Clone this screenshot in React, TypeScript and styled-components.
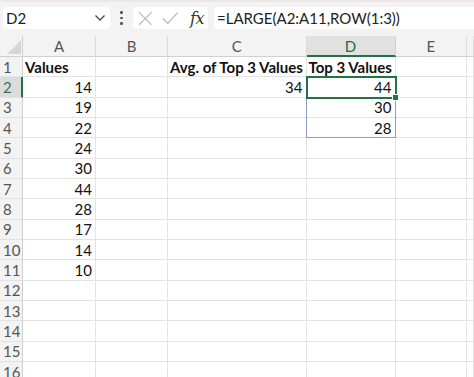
import React from "react";
import styled, { createGlobalStyle } from "styled-components";

const GlobalStyle = createGlobalStyle`
  html, body { margin: 0; padding: 0; background: #ffffff; overflow: hidden; }
  body { font-family: Lato, "Noto Sans", sans-serif; }
`;

const Page = styled.div`
  width: 474px;
  height: 377px;
  overflow: hidden;
  background: #ffffff;
`;

const FormulaBar = styled.div`
  height: 36px;
  box-sizing: border-box;
  background: #f3f3f3;
  border-top: 2px solid #efe6e6;
  display: flex;
  align-items: center;
  padding: 0 0 2px 3px;
  gap: 0;
`;

const NameBox = styled.div`
  width: 107px;
  height: 22px;
  box-sizing: border-box;
  background: #ffffff;
  border-radius: 4px;
  display: flex;
  align-items: center;
  justify-content: space-between;
  padding: 0 4px 0 3px;
  font-size: 15px;
  color: #222;
`;

const Dots = styled.div`
  width: 23px;
  display: flex;
  flex-direction: column;
  align-items: center;
  gap: 3px;
  & > span {
    width: 2.5px;
    height: 2.5px;
    border-radius: 50%;
    background: #555;
  }
`;

const FxBox = styled.div`
  width: 75px;
  height: 22px;
  box-sizing: border-box;
  background: #ffffff;
  border-radius: 4px;
  display: flex;
  align-items: center;
  padding: 0 4px 0 5px;
  gap: 9px;
`;

const Fx = styled.span`
  font-family: "DejaVu Serif", "Liberation Serif", serif;
  font-style: italic;
  font-size: 16px;
  color: #333;
  margin-left: 3px;
  letter-spacing: -0.5px;
`;

const FormulaInput = styled.div`
  flex: 1;
  margin-left: 6px;
  height: 22px;
  box-sizing: border-box;
  background: #ffffff;
  border-radius: 4px 0 0 4px;
  display: flex;
  align-items: center;
  padding-left: 3px;
  font-size: 15px;
  color: #222;
`;

const Sheet = styled.div`
  display: grid;
  grid-template-columns: 23px 73px 72px 138.5px 89px 71.5px 1fr;
  grid-template-rows: 21px repeat(16, 20.33px);
`;

interface CellProps {
  $r: number;
  $c: number;
}

const Cell = styled.div<CellProps & { $align?: "left" | "right"; $bold?: boolean }>`
  grid-row: ${(p) => p.$r};
  grid-column: ${(p) => p.$c};
  box-sizing: border-box;
  border-right: 1px solid #e3e3e3;
  border-bottom: 1px solid #e3e3e3;
  display: flex;
  align-items: center;
  justify-content: ${(p) => (p.$align === "right" ? "flex-end" : "flex-start")};
  padding: 0 3px 0 2px;
  font-size: 15px;
  font-weight: ${(p) => (p.$bold ? 700 : 400)};
  color: #111;
  white-space: nowrap;
  overflow: visible;
`;

const ColHeader = styled.div<CellProps & { $active?: boolean }>`
  grid-row: ${(p) => p.$r};
  grid-column: ${(p) => p.$c};
  box-sizing: border-box;
  background: ${(p) => (p.$active ? "#e1e1e1" : "#f3f3f3")};
  border-right: 1px solid ${(p) => (p.$active ? "#d0d0d0" : "#dcdcdc")};
  border-bottom: ${(p) => (p.$active ? "2px solid #217346" : "1px solid #d0d0d0")};
  display: flex;
  align-items: center;
  justify-content: center;
  font-size: 15px;
  color: ${(p) => (p.$active ? "#1e6b42" : "#555")};
`;

const RowHeader = styled.div<CellProps & { $active?: boolean }>`
  grid-row: ${(p) => p.$r};
  grid-column: ${(p) => p.$c};
  box-sizing: border-box;
  background: ${(p) => (p.$active ? "#dcdcdc" : "#f3f3f3")};
  border-right: ${(p) => (p.$active ? "2px solid #217346" : "1px solid #d0d0d0")};
  border-bottom: 1px solid #e2e2e2;
  display: flex;
  align-items: center;
  padding-left: 3px;
  font-size: 15px;
  color: ${(p) => (p.$active ? "#3f6f55" : "#555")};
`;

const Corner = styled.div`
  grid-row: 1;
  grid-column: 1;
  box-sizing: border-box;
  background: #f3f3f3;
  border-right: 1px solid #d0d0d0;
  border-bottom: 1px solid #d0d0d0;
  display: flex;
  align-items: flex-end;
  justify-content: flex-end;
  padding: 0 1px 2px 0;
`;

const SpillBorder = styled.div`
  grid-row: 3 / span 3;
  grid-column: 5;
  margin: -1px 0 0 -1px;
  border: 1px solid #8e9ccb;
  pointer-events: none;
  z-index: 1;
`;

const ActiveCell = styled.div`
  grid-row: 3;
  grid-column: 5;
  margin: -1px -1px -1px -1px;
  border: 2px solid #217346;
  pointer-events: none;
  position: relative;
  z-index: 2;
`;

const FillHandle = styled.span`
  position: absolute;
  right: -4px;
  bottom: -4px;
  width: 5px;
  height: 5px;
  background: #217346;
  border: 1px solid #ffffff;
`;

const colLetters = ["A", "B", "C", "D", "E", ""];
const aValues = [14, 19, 22, 24, 30, 44, 28, 17, 14, 10];

type CellData = { text: string | number; align?: "left" | "right"; bold?: boolean };

function cellAt(row: number, col: number): CellData | null {
  // row: 1..16 sheet rows, col: 1..6 (A..F)
  if (col === 1) {
    if (row === 1) return { text: "Values", bold: true };
    if (row >= 2 && row <= 11) return { text: aValues[row - 2], align: "right" };
  }
  if (col === 3) {
    if (row === 1) return { text: "Avg. of Top 3 Values", bold: true };
    if (row === 2) return { text: 34, align: "right" };
  }
  if (col === 4) {
    if (row === 1) return { text: "Top 3 Values", bold: true };
    if (row === 2) return { text: 44, align: "right" };
    if (row === 3) return { text: 30, align: "right" };
    if (row === 4) return { text: 28, align: "right" };
  }
  return null;
}

export default function App() {
  const rows = Array.from({ length: 16 }, (_, i) => i + 1);
  return (
    <Page>
      <GlobalStyle />
      <FormulaBar>
        <NameBox>
          <span>D2</span>
          <svg width="12" height="8" viewBox="0 0 12 8">
            <path d="M1.5 1.5 L6 6 L10.5 1.5" fill="none" stroke="#444" strokeWidth="1.3" />
          </svg>
        </NameBox>
        <Dots>
          <span />
          <span />
          <span />
        </Dots>
        <FxBox>
          <svg width="15" height="15" viewBox="0 0 15 15">
            <path d="M1 1 L14 14 M14 1 L1 14" stroke="#b5b5b5" strokeWidth="1.2" fill="none" />
          </svg>
          <svg width="17" height="14" viewBox="0 0 17 14">
            <path d="M1 7.5 L6 12.5 L16 1.5" stroke="#b5b5b5" strokeWidth="1.2" fill="none" />
          </svg>
          <Fx>fx</Fx>
        </FxBox>
        <FormulaInput>=LARGE(A2:A11,ROW(1:3))</FormulaInput>
      </FormulaBar>
      <Sheet>
        <Corner>
          <svg width="14" height="14" viewBox="0 0 14 14">
            <path d="M14 0 L14 14 L0 14 Z" fill="#d6d6d6" />
          </svg>
        </Corner>
        {colLetters.map((l, i) => (
          <ColHeader key={"h" + i} $r={1} $c={i + 2} $active={l === "D"}>
            {l}
          </ColHeader>
        ))}
        {rows.map((r) => (
          <React.Fragment key={"r" + r}>
            <RowHeader $r={r + 1} $c={1} $active={r === 2}>
              {r}
            </RowHeader>
            {colLetters.map((_, ci) => {
              const d = cellAt(r, ci + 1);
              return (
                <Cell key={ci} $r={r + 1} $c={ci + 2} $align={d?.align} $bold={d?.bold}>
                  {d ? d.text : ""}
                </Cell>
              );
            })}
          </React.Fragment>
        ))}
        <SpillBorder />
        <ActiveCell>
          <FillHandle />
        </ActiveCell>
      </Sheet>
    </Page>
  );
}
